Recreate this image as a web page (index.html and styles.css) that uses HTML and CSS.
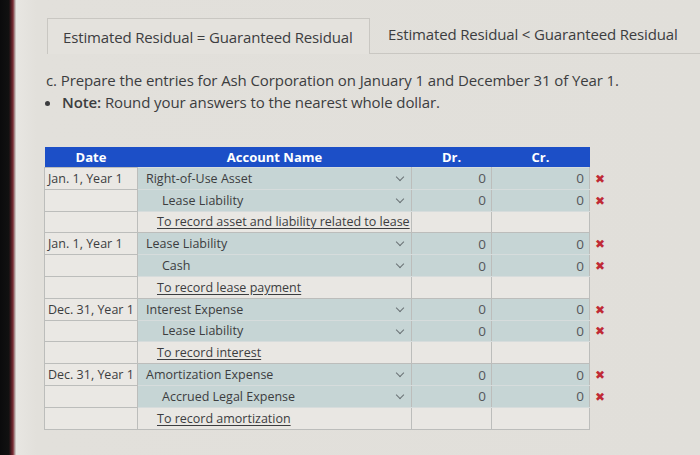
FILE: index.html
```html
<!DOCTYPE html>
<html>
<head>
<meta charset="utf-8">
<link rel="stylesheet" href="styles.css">
</head>
<body>
<div class="screen">
  <div class="bezel"></div>
  <div class="page">
    <div class="tabs">
      <div class="tab active">Estimated Residual = Guaranteed Residual</div>
      <div class="tab">Estimated Residual &lt; Guaranteed Residual</div>
    </div>
    <p class="prompt">c. Prepare the entries for Ash Corporation on January 1 and December 31 of Year 1.</p>
    <ul class="notes">
      <li><b>Note:</b> Round your answers to the nearest whole dollar.</li>
    </ul>
    <table class="journal">
      <colgroup>
        <col class="c-date"><col class="c-acct"><col class="c-dr"><col class="c-cr"><col class="c-mark">
      </colgroup>
      <thead>
        <tr><th>Date</th><th>Account Name</th><th>Dr.</th><th>Cr.</th><th class="mark"></th></tr>
      </thead>
      <tbody>
        <tr class="entry"><td class="date">Jan. 1, Year 1</td><td class="acct"><span>Right-of-Use Asset</span><i class="chev"></i></td><td class="num">0</td><td class="num">0</td><td class="mark">✖</td></tr>
        <tr class="entry"><td class="date"></td><td class="acct credit"><span>Lease Liability</span><i class="chev"></i></td><td class="num">0</td><td class="num">0</td><td class="mark">✖</td></tr>
        <tr class="memo"><td class="date"></td><td class="desc"><u>To record asset and liability related to lease</u></td><td></td><td></td><td class="mark"></td></tr>
        <tr class="entry"><td class="date">Jan. 1, Year 1</td><td class="acct"><span>Lease Liability</span><i class="chev"></i></td><td class="num">0</td><td class="num">0</td><td class="mark">✖</td></tr>
        <tr class="entry"><td class="date"></td><td class="acct credit"><span>Cash</span><i class="chev"></i></td><td class="num">0</td><td class="num">0</td><td class="mark">✖</td></tr>
        <tr class="memo"><td class="date"></td><td class="desc"><u>To record lease payment</u></td><td></td><td></td><td class="mark"></td></tr>
        <tr class="entry"><td class="date">Dec. 31, Year 1</td><td class="acct"><span>Interest Expense</span><i class="chev"></i></td><td class="num">0</td><td class="num">0</td><td class="mark">✖</td></tr>
        <tr class="entry"><td class="date"></td><td class="acct credit"><span>Lease Liability</span><i class="chev"></i></td><td class="num">0</td><td class="num">0</td><td class="mark">✖</td></tr>
        <tr class="memo"><td class="date"></td><td class="desc"><u>To record interest</u></td><td></td><td></td><td class="mark"></td></tr>
        <tr class="entry"><td class="date">Dec. 31, Year 1</td><td class="acct"><span>Amortization Expense</span><i class="chev"></i></td><td class="num">0</td><td class="num">0</td><td class="mark">✖</td></tr>
        <tr class="entry"><td class="date"></td><td class="acct credit"><span>Accrued Legal Expense</span><i class="chev"></i></td><td class="num">0</td><td class="num">0</td><td class="mark">✖</td></tr>
        <tr class="memo"><td class="date"></td><td class="desc"><u>To record amortization</u></td><td></td><td></td><td class="mark"></td></tr>
      </tbody>
    </table>
  </div>
</div>
</body>
</html>
```
FILE: styles.css
```css
html, body {
  margin: 0;
  padding: 0;
  background: #e2e0db;
}
.screen {
  display: flex;
  width: 700px;
  height: 455px;
  overflow: hidden;
  font-family: "Open Sans", "Noto Sans", sans-serif;
  color: #3c3d3f;
}
.bezel {
  width: 16px;
  flex: none;
  background: linear-gradient(to right, #0b0b0c 0, #111 9px, #4a1a20 11px, #7a2d35 13px, #b9a9a8 15px, #dcd9d4 16px);
}
.page {
  flex: 1;
  background: linear-gradient(to right, #e8e6e2 0, #e2e0db 20px, #e1dfda 100%);
  padding-top: 18px;
}
.tabs {
  display: flex;
  margin-left: 31px;
  height: 36px;
}
.tab {
  display: flex;
  align-items: center;
  font-size: 15px;
  letter-spacing: -0.15px;
}
.tab.active {
  width: 306px;
  padding-left: 15px;
  border: 1px solid #c9c7c2;
  border-bottom: none;
  background: #e4e2dd;
}
.tab:not(.active) {
  flex: 1;
  padding-left: 18px;
  padding-bottom: 4px;
  border-bottom: 1px solid #c9c7c2;
}
.prompt {
  margin: 15px 0 0 30px;
  font-size: 15px;
  line-height: 22px;
  letter-spacing: -0.1px;
}
.notes {
  margin: 0 0 0 30px;
  padding: 0 0 0 16px;
  font-size: 15px;
  line-height: 22px;
  letter-spacing: -0.1px;
}
.notes li {
  list-style: disc;
}
.notes li::marker {
  font-size: 15px;
}
.notes b {
  font-weight: 600;
}
.journal {
  margin: 34px 0 0 28px;
  border-collapse: collapse;
  table-layout: fixed;
  width: 568px;
  font-size: 12.5px;
}
.c-date { width: 93px; }
.c-acct { width: 274px; }
.c-dr { width: 80px; }
.c-cr { width: 98px; }
.c-mark { width: 23px; }
.journal th {
  background: #1c4fc7;
  color: #fff;
  font-weight: 700;
  height: 20px;
  padding: 0;
  font-size: 13px;
  line-height: 18px;
}
.journal th.mark {
  background: transparent;
}
.journal td {
  height: 20.8px;
  padding: 0;
  border: 1px solid #bcbdbb;
  background: #e9e7e3;
  white-space: nowrap;
}
.journal td.mark {
  border: none;
  background: transparent;
  color: #c02a35;
  font-size: 12px;
  padding-left: 5px;
}
.journal td.date {
  padding-left: 3px;
  background: #eae8e4;
}
.entry td.acct, .entry td.num {
  background: #c6d5d5;
  border-color: #d6dcdc #bcbdbb;
}
.acct {
  position: relative;
  padding-left: 8px !important;
}
.acct.credit {
  padding-left: 24px !important;
}
.acct span {
  display: inline-block;
}
.chev {
  position: absolute;
  right: 8px;
  top: 6px;
  width: 5px;
  height: 5px;
  border-right: 1.2px solid #6a7275;
  border-bottom: 1.2px solid #6a7275;
  transform: rotate(45deg);
}
.desc {
  padding-left: 19px !important;
}
.desc u {
  text-underline-offset: 2px;
}
.num {
  text-align: right;
  padding-right: 5px !important;
  color: #55585a;
  font-size: 13.5px;
}
```
